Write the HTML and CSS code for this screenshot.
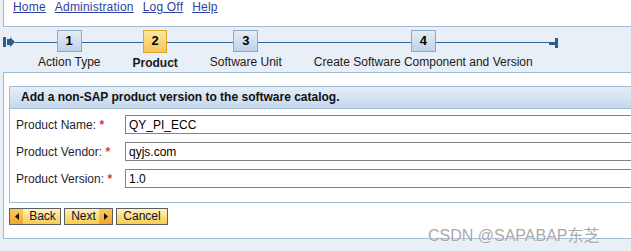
FILE: index.html
```html
<!DOCTYPE html>
<html lang="en">
<head>
    <meta charset="UTF-8">
    <title>Create Product</title>
    <link rel="stylesheet" href="styles.css">
</head>
<body>
<div class="page">
    <div class="toplinks">
        <a href="#">Home</a>
        <a href="#">Administration</a>
        <a href="#">Log Off</a>
        <a href="#">Help</a>
    </div>

    <div class="roadmap">
        <span class="rm-start">
            <svg width="12" height="10" viewBox="0 0 12 10"><rect x="0" y="0" width="3" height="10" fill="#2d5d8f"/><polygon points="4,2 7,2 7,0 12,5 7,10 7,8 4,8" fill="#2d5d8f"/></svg>
        </span>
        <div class="step"><span class="step-box">1</span><span class="step-label">Action Type</span></div>
        <div class="step active"><span class="step-box">2</span><span class="step-label">Product</span></div>
        <div class="step"><span class="step-box">3</span><span class="step-label">Software Unit</span></div>
        <div class="step"><span class="step-box">4</span><span class="step-label">Create Software Component and Version</span></div>
        <span class="rm-end">
            <svg width="10" height="10" viewBox="0 0 10 10"><rect x="0" y="4" width="7" height="3" fill="#2d5d8f"/><rect x="6" y="0" width="3" height="10" fill="#2d5d8f"/></svg>
        </span>
    </div>

    <div class="panel">
        <div class="group">
            <div class="group-head">Add a non-SAP product version to the software catalog.</div>
            <div class="form">
                <label class="field-label" for="pname">Product Name: <span class="req">*</span></label>
                <input class="field" id="pname" type="text" value="QY_PI_ECC">
                <label class="field-label" for="pvendor">Product Vendor: <span class="req">*</span></label>
                <input class="field" id="pvendor" type="text" value="qyjs.com">
                <label class="field-label" for="pversion">Product Version: <span class="req">*</span></label>
                <input class="field" id="pversion" type="text" value="1.0">
            </div>
        </div>
        <div class="buttons">
            <button type="button" class="btn btn-back"><span class="btn-icon"><svg width="4" height="7" viewBox="0 0 4 7"><polygon points="4,0 0,3.5 4,7" fill="#111"/></svg></span><span class="btn-text">Back</span></button>
            <button type="button" class="btn btn-next"><span class="btn-text">Next</span><span class="btn-icon"><svg width="4" height="7" viewBox="0 0 4 7"><polygon points="0,0 4,3.5 0,7" fill="#111"/></svg></span></button>
            <button type="button" class="btn btn-cancel"><span class="btn-text">Cancel</span></button>
        </div>
    </div>

    <div class="watermark">CSDN @SAPABAP东芝</div>
</div>
</body>
</html>
```

FILE: styles.css
```css
body {margin: 0; background: #e9eff7; overflow: hidden; font-family: "Liberation Sans", Arial, sans-serif; font-size: 12px; color: #1a1a1a;}
.page {position: relative; width: 631px; height: 251px; overflow: hidden;}

.toplinks {display: flex; gap: 9px; height: 26px; margin-left: 3px; padding-left: 9px; line-height: 14px; background: #fff; border-left: 1px solid #a3bad3; border-bottom: 1px solid #a3bad3;}
.toplinks a {color: #2f3f9f; text-decoration: underline; letter-spacing: 0.2px;}

.roadmap {display: flex; align-items: flex-start; height: 42px; padding: 3px 0 0 3px; background-image: linear-gradient(#36689b, #36689b); background-repeat: no-repeat; background-size: 535px 1px; background-position: 15px 15px;}
.rm-start {display: block; height: 10px; margin: 7px 7px 0 0;}
.rm-start svg, .rm-end svg {display: block;}
.rm-end {display: block; margin-top: 8px;}
.step {display: flex; flex-direction: column; align-items: center; padding: 0 16px;}
.step-box {box-sizing: border-box; width: 25px; height: 22px; line-height: 20px; text-align: center; font-weight: bold; font-size: 13px; color: #000; border: 1px solid #8ea9c8; background: linear-gradient(#e4ecf5, #bfd2e8);}
.step.active .step-box {width: 24px; height: 23px; border-color: #dca82a; background: linear-gradient(#fce4a2, #f5c653);}
.step-label {margin-top: 3px; line-height: 14px; white-space: nowrap; color: #1a1a1a;}
.step.active .step-label {font-weight: bold;}

.panel {margin-left: 3px; padding: 13px 0 13px 5px; background: #fff; border: 1px solid #a3bad3; border-right: 0;}
.group {border: 1px solid #a3bad3; border-right: 0;}
.group-head {height: 21px; line-height: 21px; padding-left: 11px; font-weight: bold; color: #111; background: linear-gradient(#e6eef7, #c5d8ed); border-bottom: 1px solid #a6bfd9;}
.form {display: grid; grid-template-columns: 115px 1fr; grid-auto-rows: 27px; align-items: center; padding: 2px 0 10px 0;}
.field-label {padding-left: 6px; color: #1f1f33; white-space: nowrap;}
.req {color: #e0353f; font-weight: bold;}
.field {box-sizing: border-box; width: 560px; height: 19px; margin: 0; padding: 0 3px; border: 1px solid #838383; font-family: "Liberation Sans", Arial, sans-serif; font-size: 12px; color: #000; background: #fff; outline: none;}

.buttons {display: flex; gap: 3px; margin-top: 5px;}
.btn {box-sizing: border-box; display: flex; align-items: stretch; height: 17px; padding: 0; border: 1px solid #5f5f5f; background: linear-gradient(#fff2c2, #fcdc78 55%, #f8cd52); font-family: "Liberation Sans", Arial, sans-serif; font-size: 12px; color: #10103a; cursor: pointer;}
.btn-text {flex: 1; line-height: 15px; text-align: center;}
.btn-icon {display: flex; align-items: center; justify-content: center; width: 13px; background: linear-gradient(#f9cb62, #f0a62c);}
.btn-back {width: 52px;}
.btn-back .btn-text {padding-left: 2px;}
.btn-next {width: 49px;}
.btn-next .btn-text {padding-left: 3px;}
.btn-cancel {width: 52px;}

.watermark {position: absolute; left: 428px; top: 222px; font-family: "Liberation Sans", "Noto Sans CJK SC", sans-serif; font-size: 16px; color: #a9a9a9; text-shadow: 0 0 2px #fff; white-space: nowrap;}
```
